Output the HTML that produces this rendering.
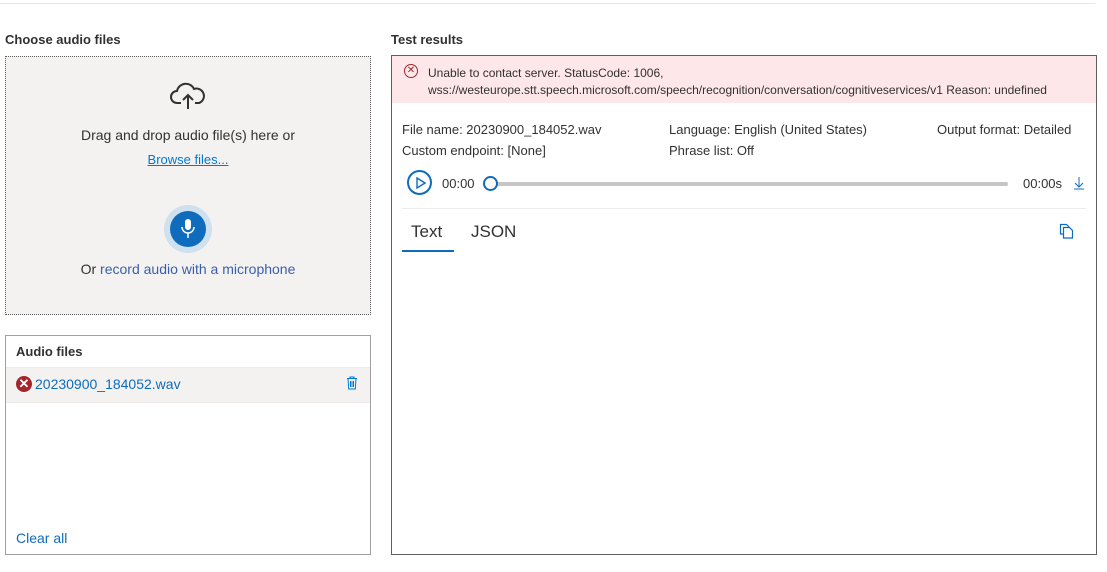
<!DOCTYPE html>
<html><head><style>
body{margin:0;width:1107px;height:572px;background:#fff;font-family:"Liberation Sans",sans-serif;color:#323130;position:relative;overflow:hidden}
.a{position:absolute;white-space:nowrap}
.b{font-weight:bold;font-size:13px}
</style></head><body>
<div class="a" style="left:0;top:3px;width:1095px;height:1px;background:#e6e6e6"></div>
<div class="a b" style="left:5px;top:32px">Choose audio files</div>
<div class="a" style="left:5px;top:56px;width:364px;height:257px;background:#f3f2f1;border:1px dotted #605e5c"></div>
<svg class="a" style="left:169px;top:82px" width="38" height="28" viewBox="0 0 38 28"><path d="M12 21H8a6 6 0 0 1 0-12 9 9 0 0 1 17-2 7 7 0 0 1 5 14h-4" fill="none" stroke="#323130" stroke-width="2"/><path d="M19 27V13M14 18l5-5 5 5" fill="none" stroke="#323130" stroke-width="2"/></svg>
<div class="a" style="left:5px;width:366px;text-align:center;top:127px;font-size:14px">Drag and drop audio file(s) here or</div>
<div class="a" style="left:5px;width:366px;text-align:center;top:152px;font-size:13px;color:#0078d4;text-decoration:underline">Browse files...</div>
<div class="a" style="left:164px;top:205px;width:48px;height:48px;border-radius:50%;background:#cfe0ee"></div>
<div class="a" style="left:170px;top:211px;width:36px;height:36px;border-radius:50%;background:#0f6cbd"></div>
<svg class="a" style="left:178px;top:218px" width="20" height="22" viewBox="0 0 20 22"><rect x="7" y="1" width="6" height="11" rx="3" fill="#fff"/><path d="M4 9a6 6 0 0 0 12 0M10 15v5" stroke="#fff" stroke-width="1.5" fill="none"/></svg>
<div class="a" style="left:5px;width:366px;text-align:center;top:261px;font-size:14px;color:#3a5fa8"><span style="color:#323130">Or</span> record audio with a microphone</div>

<div class="a" style="left:5px;top:335px;width:364px;height:218px;border:1px solid #a19f9d"></div>
<div class="a b" style="left:16px;top:344px">Audio files</div>
<div class="a" style="left:6px;top:367px;width:364px;height:34px;background:#f3f2f1;border-top:1px solid #edebe9;border-bottom:1px solid #edebe9"></div>
<div class="a" style="left:16px;top:376px;width:16px;height:16px;border-radius:50%;background:#a4262c;color:#fff;font-size:13px;font-weight:bold;text-align:center;line-height:16px">✕</div>
<div class="a" style="left:35px;top:376px;font-size:14px;color:#0f6cbd">20230900_184052.wav</div>
<svg class="a" style="left:346px;top:376px" width="12" height="14" viewBox="0 0 12 14"><path d="M1 2.5h10M4 2.5V1h4v1.5M2 2.5l.7 10.5h6.6L10 2.5M4.5 5v6M6 5v6M7.5 5v6" fill="none" stroke="#0078d4" stroke-width="1"/></svg>
<div class="a" style="left:16px;top:530px;font-size:14px;color:#0f6cbd">Clear all</div>

<div class="a b" style="left:391px;top:32px">Test results</div>
<div class="a" style="left:391px;top:55px;width:704px;height:498px;border:1px solid #605e5c"></div>
<div class="a" style="left:392px;top:56px;width:704px;height:47px;background:#fde7e9"></div>
<div class="a" style="left:404px;top:64px;width:12px;height:12px;border:1.3px solid #a4262c;border-radius:50%;color:#a4262c;font-size:10px;text-align:center;line-height:12px">✕</div>
<div class="a" style="left:428px;top:65px;font-size:12px;line-height:17px">Unable to contact server. StatusCode: 1006,<br>wss://westeurope.stt.speech.microsoft.com/speech/recognition/conversation/cognitiveservices/v1 Reason: undefined</div>
<div class="a" style="left:402px;top:119px;font-size:13px;line-height:21px">File name: 20230900_184052.wav<br>Custom endpoint: [None]</div>
<div class="a" style="left:669px;top:119px;font-size:13px;line-height:21px">Language: English (United States)<br>Phrase list: Off</div>
<div class="a" style="left:937px;top:119px;font-size:13px;line-height:21px">Output format: Detailed</div>
<div class="a" style="left:407px;top:170px;width:25px;height:25px;border:2px solid #0f6cbd;border-radius:50%;box-sizing:border-box"></div>
<svg class="a" style="left:416px;top:177px" width="10" height="12"><path d="M1 1l8 5-8 5z" fill="none" stroke="#0f6cbd" stroke-width="1.4"/></svg>
<div class="a" style="left:442px;top:176px;font-size:13px">00:00</div>
<div class="a" style="left:490px;top:182px;width:518px;height:4px;background:#c8c6c4;border-radius:2px"></div>
<div class="a" style="left:483px;top:176px;width:15px;height:15px;border:2px solid #0f6cbd;border-radius:50%;background:#fff;box-sizing:border-box"></div>
<div class="a" style="left:1023px;top:176px;font-size:13px">00:00s</div>
<svg class="a" style="left:1073px;top:176px" width="12" height="14"><path d="M6 1v10M2 7l4 4 4-4M1 13h10" fill="none" stroke="#0f6cbd" stroke-width="1"/></svg>
<div class="a" style="left:402px;top:208px;width:684px;height:1px;background:#edebe9"></div>
<div class="a" style="left:411px;top:222px;font-size:17px">Text</div>
<div class="a" style="left:471px;top:222px;font-size:17px">JSON</div>
<div class="a" style="left:402px;top:250px;width:52px;height:2px;background:#0f6cbd"></div>
<svg class="a" style="left:1059px;top:223px" width="16" height="16"><path d="M1.5 1.5h6l3 3V11h-9z" fill="none" stroke="#0f6cbd" stroke-width="1.2"/><path d="M4.5 4.5h6l3 3V15h-9z" fill="#fff" stroke="#0f6cbd" stroke-width="1.2"/></svg>
</body></html>
